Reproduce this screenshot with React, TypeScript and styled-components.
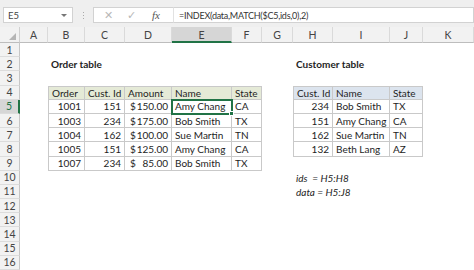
import React from "react";
import styled, { createGlobalStyle, css } from "styled-components";

const Global = createGlobalStyle`
  html, body { margin: 0; padding: 0; background: #ffffff; }
  body { font-family: "Lato", "Liberation Sans", sans-serif; color: #222; overflow: hidden; }
  * { box-sizing: border-box; }
`;

const GREEN = "#217346";
const LINE = "#c9c9c9";

const Page = styled.div`
  width: 474px;
  height: 270px;
  display: flex;
  flex-direction: column;
  background: #fff;
`;

const FormulaBar = styled.div`
  height: 28px;
  background: #efefef;
  display: flex;
  align-items: flex-start;
  padding: 7px 0 0 3px;
  gap: 0;
`;

const NameBox = styled.div`
  width: 70px;
  height: 16px;
  background: #fff;
  border: 1px solid #d2d2d2;
  display: flex;
  align-items: center;
  justify-content: space-between;
  padding: 0 5px 0 4px;
  font-size: 9.5px;
  color: #444;
`;

const Caret = styled.span`
  width: 0;
  height: 0;
  border-left: 3px solid transparent;
  border-right: 3px solid transparent;
  border-top: 3px solid #777;
`;

const Dots = styled.div`
  width: 20px;
  height: 16px;
  display: flex;
  flex-direction: column;
  align-items: center;
  justify-content: center;
  gap: 2px;
  & > span {
    width: 1px;
    height: 1px;
    background: #aaa;
  }
`;

const ButtonsBox = styled.div`
  width: 80px;
  height: 16px;
  background: #fff;
  border: 1px solid #d2d2d2;
  border-right: none;
  display: flex;
  align-items: center;
  padding-left: 10px;
  gap: 0;
  color: #b8b8b8;
  font-size: 11px;
`;

const Btn = styled.span<{ $w: number }>`
  width: ${(p) => p.$w}px;
  display: flex;
  align-items: center;
  justify-content: flex-start;
`;

const Fx = styled.span`
  font-family: "Liberation Serif", serif;
  font-style: italic;
  font-size: 11px;
  color: #555;
`;

const FormulaInput = styled.div`
  flex: 1;
  height: 16px;
  background: #fff;
  border: 1px solid #d2d2d2;
  border-left: 1px solid #e2e2e2;
  display: flex;
  align-items: center;
  padding-left: 5px;
  font-size: 9px;
  letter-spacing: -0.25px;
  color: #333;
  white-space: nowrap;
`;

const COLS = [20, 28, 37, 40, 47, 60, 30, 31, 40, 57, 33];
const LETTERS = ["A", "B", "C", "D", "E", "F", "G", "H", "I", "J", "K"];

const Sheet = styled.div`
  display: grid;
  grid-template-columns: ${COLS.map((c) => c + "px").join(" ")} 1fr;
  grid-template-rows: 16px repeat(16, 14.2px);
  font-size: 10px;
`;

const Corner = styled.div`
  background: #f2f2f2;
  border-right: 1px solid #d0d0d0;
  border-bottom: 1px solid #bdbdbd;
  display: flex;
  align-items: flex-end;
  justify-content: flex-end;
  padding: 0 3px 2px 0;
`;

const ColHead = styled.div<{ $active?: boolean }>`
  background: ${(p) => (p.$active ? "#d6d6d6" : "#f2f2f2")};
  border-right: 1px solid #dadada;
  border-bottom: ${(p) => (p.$active ? `2px solid ${GREEN}` : "1px solid #bdbdbd")};
  display: flex;
  align-items: center;
  justify-content: center;
  color: #444;
  font-size: 10.5px;
  padding-top: ${(p) => (p.$active ? "1px" : "0")};
`;

const RowHead = styled.div<{ $active?: boolean }>`
  background: ${(p) => (p.$active ? "#d6d6d6" : "#f2f2f2")};
  border-bottom: 1px solid #dcdcdc;
  border-right: ${(p) => (p.$active ? `2px solid ${GREEN}` : "1px solid #c6c6c6")};
  display: flex;
  align-items: center;
  justify-content: center;
  color: ${(p) => (p.$active ? GREEN : "#444")};
  font-size: 10.5px;
`;

type Align = "left" | "right";

const Cell = styled.div<{
  $table?: "order" | "cust";
  $head?: boolean;
  $first?: boolean;
  $top?: boolean;
  $align?: Align;
  $bold?: boolean;
  $italic?: boolean;
  $selected?: boolean;
}>`
  position: relative;
  display: flex;
  align-items: center;
  white-space: pre;
  padding: 0 3px 0 3px;
  justify-content: ${(p) => (p.$align === "right" ? "flex-end" : "flex-start")};
  font-weight: ${(p) => (p.$bold ? 700 : 400)};
  font-style: ${(p) => (p.$italic ? "italic" : "normal")};
  color: #1e1e1e;
  overflow: visible;
  ${(p) =>
    p.$table &&
    css`
      border-right: 1px solid ${LINE};
      border-bottom: 1px solid ${LINE};
      ${p.$first ? `border-left: 1px solid ${LINE};` : ""}
      ${p.$top ? `border-top: 1px solid ${LINE};` : ""}
    `}
  ${(p) =>
    p.$head &&
    css`
      background: ${p.$table === "order" ? "#e5ead7" : "#dce4ee"};
    `}
  ${(p) =>
    p.$selected &&
    css`
      outline: 2px solid ${GREEN};
      outline-offset: -1px;
      z-index: 1;
    `}
`;

const Handle = styled.span`
  position: absolute;
  right: -3px;
  bottom: -3px;
  width: 5px;
  height: 5px;
  background: ${GREEN};
  border: 1px solid #fff;
`;

const Money = styled.span`
  flex: 1;
  display: flex;
  justify-content: space-between;
  padding-left: 2px;
`;

type CellDef = {
  text?: string;
  money?: string;
  table?: "order" | "cust";
  head?: boolean;
  first?: boolean;
  top?: boolean;
  align?: Align;
  bold?: boolean;
  italic?: boolean;
};

const cells: Record<string, CellDef> = {};

cells["B2"] = { text: "Order table", bold: true };
cells["H2"] = { text: "Customer table", bold: true };
cells["H10"] = { text: "ids  = H5:H8", italic: true };
cells["H11"] = { text: "data = H5:J8", italic: true };

function addTable(
  table: "order" | "cust",
  startCol: number,
  startRow: number,
  headers: string[],
  aligns: (Align | "money")[],
  rows: string[][]
) {
  headers.forEach((h, i) => {
    cells[LETTERS[startCol + i] + startRow] = {
      text: h,
      table,
      head: true,
      top: true,
      first: i === 0,
      align: "left",
    };
  });
  rows.forEach((r, ri) => {
    r.forEach((v, i) => {
      const a = aligns[i];
      cells[LETTERS[startCol + i] + (startRow + 1 + ri)] = {
        text: a === "money" ? undefined : v,
        money: a === "money" ? v : undefined,
        table,
        first: i === 0,
        align: a === "money" ? "left" : a,
      };
    });
  });
}

addTable(
  "order",
  1,
  4,
  ["Order", "Cust. Id", "Amount", "Name", "State"],
  ["right", "right", "money", "left", "left"],
  [
    ["1001", "151", "150.00", "Amy Chang", "CA"],
    ["1003", "234", "175.00", "Bob Smith", "TX"],
    ["1004", "162", "100.00", "Sue Martin", "TN"],
    ["1005", "151", "125.00", "Amy Chang", "CA"],
    ["1007", "234", "85.00", "Bob Smith", "TX"],
  ]
);

addTable(
  "cust",
  7,
  4,
  ["Cust. Id", "Name", "State"],
  ["right", "left", "left"],
  [
    ["234", "Bob Smith", "TX"],
    ["151", "Amy Chang", "CA"],
    ["162", "Sue Martin", "TN"],
    ["132", "Beth Lang", "AZ"],
  ]
);

const CornerMark = () => (
  <svg width="7" height="7" viewBox="0 0 7 7">
    <polygon points="7,0 7,7 0,7" fill="#b5b5b5" />
  </svg>
);

export default function App() {
  const rows = Array.from({ length: 16 }, (_, i) => i + 1);
  const selected = "E5";
  return (
    <Page>
      <Global />
      <FormulaBar>
        <NameBox>
          <span>E5</span>
          <Caret />
        </NameBox>
        <Dots>
          <span />
          <span />
          <span />
        </Dots>
        <ButtonsBox>
          <Btn $w={23}>✕</Btn>
          <Btn $w={25}>✓</Btn>
          <Btn $w={20}>
            <Fx>fx</Fx>
          </Btn>
        </ButtonsBox>
        <FormulaInput>=INDEX(data,MATCH($C5,ids,0),2)</FormulaInput>
      </FormulaBar>
      <Sheet>
        <Corner>
          <CornerMark />
        </Corner>
        {LETTERS.map((l) => (
          <ColHead key={l} $active={l === "E"}>
            {l}
          </ColHead>
        ))}
        {rows.map((r) => (
          <React.Fragment key={r}>
            <RowHead $active={r === 5}>{r}</RowHead>
            {LETTERS.map((l) => {
              const id = l + r;
              const d = cells[id];
              const isSel = id === selected;
              return (
                <Cell
                  key={id}
                  $table={d?.table}
                  $head={d?.head}
                  $first={d?.first}
                  $top={d?.top}
                  $align={d?.align}
                  $bold={d?.bold}
                  $italic={d?.italic}
                  $selected={isSel}
                >
                  {d?.money ? (
                    <Money>
                      <span>$</span>
                      <span>{d.money}</span>
                    </Money>
                  ) : (
                    d?.text
                  )}
                  {isSel && <Handle />}
                </Cell>
              );
            })}
          </React.Fragment>
        ))}
      </Sheet>
    </Page>
  );
}
